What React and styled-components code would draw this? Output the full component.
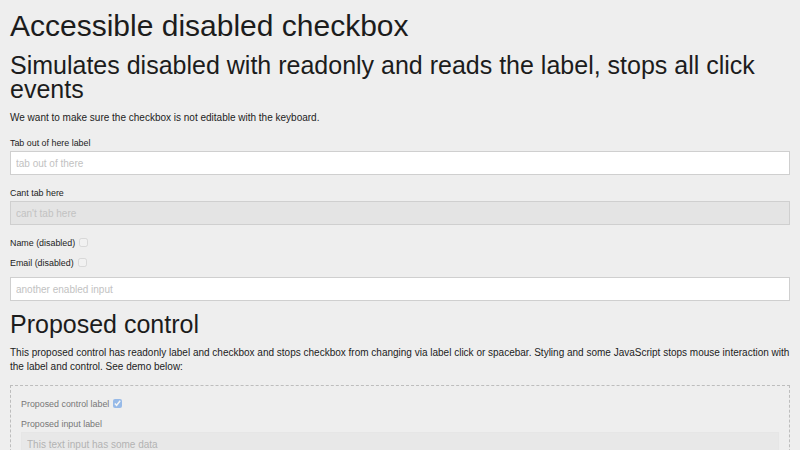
import React from 'react';
import styled, { createGlobalStyle } from 'styled-components';

const GlobalStyle = createGlobalStyle`
  html, body {
    margin: 0;
    padding: 0;
    background: #eeeeee;
  }
  body {
    font-family: "Liberation Sans", Arial, sans-serif;
    color: #1c1c1c;
  }
`;

const Page = styled.div`
  padding: 9px 10px 0;
`;

const Title = styled.h1`
  font-size: 30px;
  line-height: 34px;
  font-weight: 400;
  margin: 0;
`;

const Heading = styled.h2`
  font-size: 25px;
  line-height: 24px;
  font-weight: 400;
  margin: ${(p) => p.$top || 10}px 0 0;
`;

const Text = styled.p`
  font-size: 10px;
  line-height: 14px;
  margin: ${(p) => p.$top || 10}px 0 0;
`;

const Field = styled.div`
  margin-top: ${(p) => p.$top ?? 12}px;
`;

const Label = styled.label`
  display: block;
  font-size: 8.9px;
  line-height: 12px;
  color: ${(p) => (p.$muted ? '#777777' : '#1c1c1c')};
`;

const Input = styled.input`
  display: block;
  box-sizing: border-box;
  width: 100%;
  height: 24px;
  margin-top: ${(p) => p.$top ?? 2}px;
  padding: 0 5px;
  font-family: inherit;
  font-size: 10px;
  color: #555;
  background: ${(p) => (p.disabled ? '#e4e4e4' : '#ffffff')};
  border: 1px solid #cfcfcf;
  border-radius: 0;
  outline: none;

  &::placeholder {
    color: #c2c2c2;
  }
`;

const ReadonlyInput = styled(Input)`
  background: #e8e8e8;
  border-color: #e6e6e6;
  color: #b3b3b3;
`;

const CheckRow = styled.div`
  margin-top: ${(p) => p.$top ?? 8}px;
  display: flex;
  align-items: center;
  gap: 4px;
`;

const RowLabel = styled.span`
  font-size: 8.9px;
  line-height: 12px;
  color: ${(p) => (p.$muted ? '#777777' : '#1c1c1c')};
`;

const Check = styled.input`
  width: 9px;
  height: 9px;
  margin: 0 0 2px;
  accent-color: #2f7de1;
  opacity: ${(p) => (p.checked ? 0.45 : 0.6)};
  pointer-events: none;
`;

const DemoBox = styled.div`
  margin-top: 11px;
  border: 1px dashed #bdbdbd;
  padding: 12px 10px 10px;
`;

export default function App() {
  return (
    <>
      <GlobalStyle />
      <Page>
        <Title>Accessible disabled checkbox</Title>
        <Heading>Simulates disabled with readonly and reads the label, stops all click events</Heading>
        <Text>We want to make sure the checkbox is not editable with the keyboard.</Text>

        <Field $top={12}>
          <Label>Tab out of here label</Label>
          <Input placeholder="tab out of there" />
        </Field>
        <Field>
          <Label>Cant tab here</Label>
          <Input placeholder="can't tab here" disabled />
        </Field>

        <CheckRow $top={12}>
          <RowLabel>Name (disabled)</RowLabel>
          <Check type="checkbox" disabled />
        </CheckRow>
        <CheckRow>
          <RowLabel>Email (disabled)</RowLabel>
          <Check type="checkbox" disabled />
        </CheckRow>
        <Input placeholder="another enabled input" $top={8} />

        <Heading $top={11}>Proposed control</Heading>
        <Text>
          This proposed control has readonly label and checkbox and stops checkbox from changing via label click or
          spacebar. Styling and some JavaScript stops mouse interaction with the label and control. See demo below:
        </Text>

        <DemoBox>
          <CheckRow $top={0}>
            <RowLabel $muted>Proposed control label</RowLabel>
            <Check type="checkbox" checked readOnly tabIndex={-1} aria-readonly="true" />
          </CheckRow>
          <Field $top={8}>
            <Label $muted>Proposed input label</Label>
            <ReadonlyInput readOnly defaultValue="This text input has some data" $top={2} />
          </Field>
        </DemoBox>
      </Page>
    </>
  );
}
